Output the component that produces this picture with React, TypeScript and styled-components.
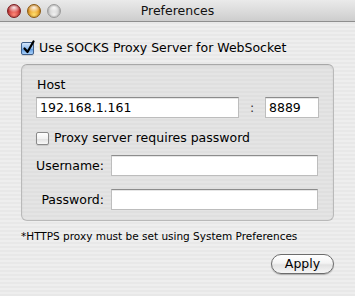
import React from "react";
import styled, { createGlobalStyle } from "styled-components";

const Global = createGlobalStyle`
  html, body { margin: 0; padding: 0; }
  body { font-family: "DejaVu Sans", "Noto Sans", sans-serif; color: #000; }
  * { box-sizing: border-box; }
`;

const Window = styled.div`
  width: 355px;
  height: 296px;
  display: flex;
  flex-direction: column;
  overflow: hidden;
  background: repeating-linear-gradient(
    to bottom,
    #eeeeee 0px,
    #eeeeee 2px,
    #e8e8e8 2px,
    #e8e8e8 4px
  );
`;

const TitleBar = styled.div`
  height: 22px;
  flex: none;
  display: flex;
  align-items: center;
  position: relative;
  background: linear-gradient(to bottom, #eaeaea 0%, #dcdcdc 50%, #cdcdcd 100%);
  border-bottom: 1px solid #8e8e8e;
  padding-left: 7px;
  gap: 6px;
`;

const Light = styled.span<{ $base: string; $dark: string; $hi: string }>`
  width: 14px;
  height: 14px;
  border-radius: 50%;
  border: 1px solid ${(p) => p.$dark};
  background: radial-gradient(
      ellipse 60% 40% at 50% 22%,
      rgba(255, 255, 255, 0.9) 0%,
      rgba(255, 255, 255, 0) 100%
    ),
    radial-gradient(circle at 50% 80%, ${(p) => p.$hi} 0%, ${(p) => p.$base} 70%);
  box-shadow: inset 0 0 2px rgba(0, 0, 0, 0.35);
`;

const Title = styled.div`
  position: absolute;
  left: 0;
  right: 0;
  top: 0;
  height: 21px;
  line-height: 21px;
  text-align: center;
  font-size: 12.5px;
  color: #111;
  pointer-events: none;
`;

const Content = styled.div`
  display: flex;
  flex-direction: column;
  padding: 18px 21px 0 21px;
`;

const CheckRow = styled.label`
  display: flex;
  align-items: center;
  gap: 5px;
  height: 16px;
  font-size: 12.5px;
  line-height: 16px;
`;

const Box = styled.span<{ $checked?: boolean }>`
  position: relative;
  width: 13px;
  height: 13px;
  flex: none;
  border: 1px solid ${(p) => (p.$checked ? "#3f5f8a" : "#8a8a8a")};
  border-radius: 2px;
  background: ${(p) =>
    p.$checked
      ? "linear-gradient(to bottom, #d4e6fb 0%, #8fbcef 50%, #5d9ae0 55%, #a9d1fb 100%)"
      : "linear-gradient(to bottom, #ffffff 0%, #f2f2f2 50%, #e2e2e2 55%, #f8f8f8 100%)"};
  box-shadow: 0 1px 1px rgba(0, 0, 0, 0.12);
  svg {
    position: absolute;
    left: 0px;
    top: -3px;
  }
`;

const Group = styled.div`
  margin-top: 8px;
  border: 1px solid #b9b9b9;
  border-top-color: #a8a8a8;
  border-radius: 6px;
  background: repeating-linear-gradient(
    to bottom,
    #e4e4e4 0px,
    #e4e4e4 2px,
    #dfdfdf 2px,
    #dfdfdf 4px
  );
  box-shadow: inset 0 1px 2px rgba(0, 0, 0, 0.08);
  padding: 12px 14px 10px 14px;
  display: flex;
  flex-direction: column;
`;

const Label = styled.div`
  font-size: 12.5px;
  line-height: 16px;
  height: 16px;
  padding-left: 1px;
`;

const HostRow = styled.div`
  display: flex;
  align-items: center;
  margin-top: 4px;
`;

const Input = styled.div<{ $w: number }>`
  width: ${(p) => p.$w}px;
  height: 21px;
  flex: none;
  background: #fff;
  border: 1px solid #bdbdbd;
  border-top-color: #8c8c8c;
  box-shadow: inset 0 1px 0 #e6e6e6;
  font-size: 12.5px;
  line-height: 19px;
  padding-left: 3px;
`;

const Colon = styled.div`
  width: 26px;
  text-align: center;
  font-size: 12.5px;
  color: #333;
`;

const SubCheck = styled(CheckRow)`
  margin-top: 12px;
`;

const FormRow = styled.div<{ $mt: number }>`
  display: flex;
  align-items: center;
  margin-top: ${(p) => p.$mt}px;
`;

const FormLabel = styled.div`
  width: 68px;
  text-align: right;
  font-size: 12.5px;
  margin-right: 7px;
`;

const Note = styled.div`
  margin-top: 8px;
  font-size: 10.5px;
  line-height: 14px;
  padding-left: 0px;
`;

const Footer = styled.div`
  display: flex;
  justify-content: flex-end;
  margin-top: 11px;
`;

const Button = styled.button`
  width: 63px;
  height: 20px;
  border-radius: 10px;
  border: 1px solid #6c6c6c;
  background: linear-gradient(to bottom, #ffffff 0%, #f4f4f4 45%, #e2e2e2 55%, #f6f6f6 100%);
  box-shadow: 0 1px 1px rgba(0, 0, 0, 0.25);
  font-family: "DejaVu Sans", sans-serif;
  font-size: 12.5px;
  color: #000;
  padding: 0;
  line-height: 18px;
`;

const Check = () => (
  <svg width="14" height="15" viewBox="0 0 14 15">
    <path d="M2.5 8.5 L5.5 12 L11.5 1.5" fill="none" stroke="#000" strokeWidth="2.2" strokeLinecap="round" strokeLinejoin="round" />
  </svg>
);

export default function App() {
  return (
    <>
      <Global />
      <Window>
        <TitleBar>
          <Light $base="#c0262a" $dark="#7a1a1c" $hi="#ff8a7a" />
          <Light $base="#e08a10" $dark="#8c5a10" $hi="#ffe070" />
          <Light $base="#c4c4c4" $dark="#9a9a9a" $hi="#f2f2f2" />
          <Title>Preferences</Title>
        </TitleBar>
        <Content>
          <CheckRow>
            <Box $checked>
              <Check />
            </Box>
            Use SOCKS Proxy Server for WebSocket
          </CheckRow>
          <Group>
            <Label>Host</Label>
            <HostRow>
              <Input $w={203}>192.168.1.161</Input>
              <Colon>:</Colon>
              <Input $w={54}>8889</Input>
            </HostRow>
            <SubCheck>
              <Box />
              Proxy server requires password
            </SubCheck>
            <FormRow $mt={9}>
              <FormLabel>Username:</FormLabel>
              <Input $w={207} />
            </FormRow>
            <FormRow $mt={13}>
              <FormLabel>Password:</FormLabel>
              <Input $w={207} />
            </FormRow>
          </Group>
          <Note>*HTTPS proxy must be set using System Preferences</Note>
          <Footer>
            <Button>Apply</Button>
          </Footer>
        </Content>
      </Window>
    </>
  );
}
